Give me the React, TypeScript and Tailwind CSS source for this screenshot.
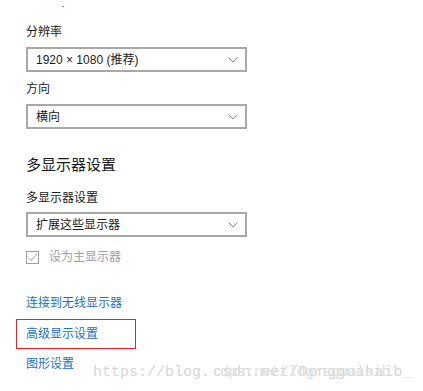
const font = { fontFamily: '"Liberation Sans", "Noto Sans CJK SC", sans-serif' };
const mono = { fontFamily: '"Liberation Mono", monospace' };

function Chevron() {
  return (
    <svg width="10" height="6" viewBox="0 0 10 6" className="shrink-0">
      <path d="M0.5 0.5 L5 5 L9.5 0.5" fill="none" stroke="#8a8a8a" strokeWidth="1" />
    </svg>
  );
}

function Select({ value }: { value: string }) {
  return (
    <div className="w-[221px] h-[25px] border-2 border-[#a8a8a8] flex items-center justify-between pl-[8px] pr-[7px] text-[12px] text-[#1a1a1a]">
      <span>{value}</span>
      <Chevron />
    </div>
  );
}

export default function App() {
  return (
    <div className="w-[423px] h-[391px] bg-white relative overflow-hidden" style={font}>
      <div className="absolute left-[62px] top-[6px] w-[2px] h-[1px] bg-[#7aa7d0]" />
      <div className="pl-[26px] pt-[24px] flex flex-col">
        <div className="text-[12px] leading-[16px] text-[#1a1a1a]">分辨率</div>
        <div className="mt-[7px]">
          <Select value="1920 × 1080 (推荐)" />
        </div>
        <div className="mt-[9px] text-[12px] leading-[16px] text-[#1a1a1a]">方向</div>
        <div className="mt-[7px]">
          <Select value="横向" />
        </div>
        <div className="mt-[26px] text-[15px] leading-[20px] text-[#1a1a1a]">多显示器设置</div>
        <div className="mt-[15px] text-[12px] leading-[16px] text-[#1a1a1a]">多显示器设置</div>
        <div className="mt-[6px]">
          <Select value="扩展这些显示器" />
        </div>
        <div className="mt-[12px] flex items-center gap-[10px]">
          <div className="w-[13px] h-[13px] border border-[#a0a0a0] flex items-center justify-center">
            <svg width="11" height="9" viewBox="0 0 11 9">
              <path d="M1 4.5 L4 7.5 L10 1" fill="none" stroke="#a0a0a0" strokeWidth="1" />
            </svg>
          </div>
          <span className="text-[12px] leading-[16px] text-[#a0a0a0]">设为主显示器</span>
        </div>
        <div className="mt-[30px] text-[12px] leading-[16px] text-[#1a73c8]">连接到无线显示器</div>
        <div className="-ml-[10px] mt-[8px] w-[120px] h-[30px] border-[1.5px] border-[#e0262b] flex items-center pl-[9px]">
          <span className="text-[12px] leading-[16px] text-[#1a73c8]">高级显示设置</span>
        </div>
        <div className="mt-[7px] text-[12px] leading-[16px] text-[#1a73c8]">图形设置</div>
      </div>
      <div
        className="absolute left-[93px] top-[363px] text-[15px] leading-[20px] text-[#d6d6d6] whitespace-nowrap"
        style={mono}
      >
        https://blog.
      </div>
      <div
        className="absolute left-[213px] top-[363px] text-[15px] leading-[20px] text-[#d6d6d6] whitespace-nowrap tracking-[0.5px]"
        style={mono}
      >
        csdn.net/Dongguahaib_
      </div>
      <div
        className="absolute left-[220px] top-[363px] text-[15px] leading-[20px] text-[#e0e0e0] whitespace-nowrap tracking-[-0.5px]"
        style={mono}
      >
        dps:net/logrsgualaib
      </div>
    </div>
  );
}
